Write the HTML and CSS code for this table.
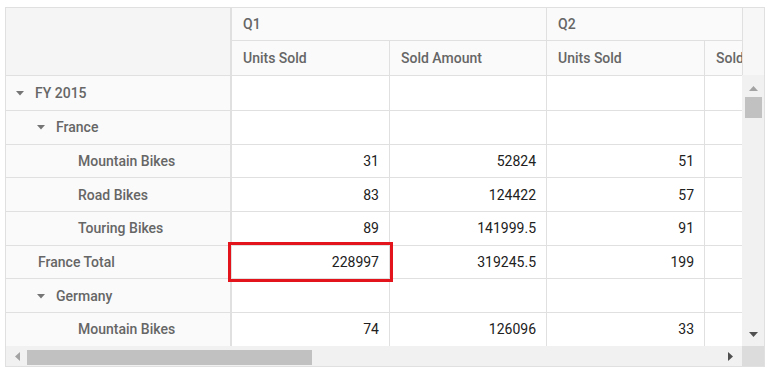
FILE: index.html
```html
<!DOCTYPE html>
<html>
<head>
<meta charset="utf-8">
<link rel="stylesheet" href="styles.css">
</head>
<body>
<div class="pivot">
  <div class="viewport">
    <table class="pv-table">
      <colgroup>
        <col class="c-row"><col class="c-1"><col class="c-2"><col class="c-3"><col class="c-4">
      </colgroup>
      <thead>
        <tr class="hrow1">
          <th class="corner-cell" rowspan="2"></th>
          <th class="colhead" colspan="2">Q1</th>
          <th class="colhead" colspan="2">Q2</th>
        </tr>
        <tr class="hrow2">
          <th class="colhead">Units Sold</th>
          <th class="colhead">Sold Amount</th>
          <th class="colhead">Units Sold</th>
          <th class="colhead">Sold Amount</th>
        </tr>
      </thead>
      <tbody>
        <tr>
          <th class="rowhead lvl0"><span class="caret"><svg width="8" height="5" viewBox="0 0 8 5"><path d="M0 0H8L4 4.5Z"/></svg></span>FY 2015</th>
          <td></td><td></td><td></td><td></td>
        </tr>
        <tr>
          <th class="rowhead lvl1"><span class="caret"><svg width="8" height="5" viewBox="0 0 8 5"><path d="M0 0H8L4 4.5Z"/></svg></span>France</th>
          <td></td><td></td><td></td><td></td>
        </tr>
        <tr>
          <th class="rowhead leaf">Mountain Bikes</th>
          <td>31</td><td>52824</td><td>51</td><td></td>
        </tr>
        <tr>
          <th class="rowhead leaf">Road Bikes</th>
          <td>83</td><td>124422</td><td>57</td><td></td>
        </tr>
        <tr>
          <th class="rowhead leaf">Touring Bikes</th>
          <td>89</td><td>141999.5</td><td>91</td><td></td>
        </tr>
        <tr>
          <th class="rowhead total">France Total</th>
          <td>228997</td><td>319245.5</td><td>199</td><td></td>
        </tr>
        <tr>
          <th class="rowhead lvl1"><span class="caret"><svg width="8" height="5" viewBox="0 0 8 5"><path d="M0 0H8L4 4.5Z"/></svg></span>Germany</th>
          <td></td><td></td><td></td><td></td>
        </tr>
        <tr>
          <th class="rowhead leaf">Mountain Bikes</th>
          <td>74</td><td>126096</td><td>33</td><td></td>
        </tr>
      </tbody>
    </table>
  </div>
  <div class="vscroll">
    <div class="vs-head"></div>
    <div class="vs-track">
      <span class="arrow up"><svg width="9" height="5" viewBox="0 0 9 5"><path d="M0 5H9L4.5 0Z"/></svg></span>
      <span class="vthumb"></span>
      <span class="vspace"></span>
      <span class="arrow down"><svg width="9" height="5" viewBox="0 0 9 5"><path d="M0 0H9L4.5 5Z"/></svg></span>
    </div>
  </div>
  <div class="hscroll">
    <span class="arrow left"><svg width="5" height="9" viewBox="0 0 5 9"><path d="M5 0V9L0 4.5Z"/></svg></span>
    <span class="hthumb"></span>
    <span class="hspace"></span>
    <span class="arrow right"><svg width="5" height="9" viewBox="0 0 5 9"><path d="M0 0V9L5 4.5Z"/></svg></span>
  </div>
  <div class="sb-corner"></div>
  <div class="highlight"></div>
</div>
</body>
</html>
```

FILE: styles.css
```css
html, body {
  margin: 0;
  padding: 0;
  background: #ffffff;
}

body {
  font-family: Roboto, "Liberation Sans", Arial, sans-serif;
  font-size: 14px;
}

.pivot {
  position: relative;
  box-sizing: border-box;
  margin: 7px 0 0 5px;
  width: 760px;
  height: 360px;
  border: 1px solid #e0e0e0;
  display: grid;
  grid-template-columns: 1fr 22px;
  grid-template-rows: 1fr 20px;
}

.viewport {
  grid-column: 1;
  grid-row: 1;
  overflow: hidden;
}

.pv-table {
  table-layout: fixed;
  border-collapse: separate;
  border-spacing: 0;
  width: 858px;
}

.c-row { width: 226px; }
.c-1 { width: 158px; }
.c-2 { width: 157px; }
.c-3 { width: 158px; }
.c-4 { width: 159px; }

.pv-table th,
.pv-table td {
  box-sizing: border-box;
  border-right: 1px solid #e0e0e0;
  border-bottom: 1px solid #e0e0e0;
  padding: 0;
  white-space: nowrap;
  overflow: hidden;
}

.hrow1 th { height: 33px; }
.hrow2 th { height: 35px; }
.pv-table tbody tr { height: 33.67px; }
.pv-table tbody tr:first-child { height: 35px; }

.corner-cell {
  background: #f5f5f5;
  border-right: 2px solid #e0e0e0 !important;
}

.colhead {
  background: #fafafa;
  color: #666666;
  font-weight: 500;
  text-align: left;
  padding-left: 11px !important;
}

.rowhead {
  background: #fafafa;
  color: #666666;
  font-weight: 500;
  text-align: left;
  border-right: 2px solid #e0e0e0 !important;
}

.caret {
  display: inline-block;
  width: 8px;
  margin-right: 11px;
  vertical-align: 2px;
  line-height: 0;
}

.caret svg { fill: #757575; }

.lvl0 { padding-left: 10px !important; }
.lvl1 { padding-left: 31px !important; }
.leaf { padding-left: 72px !important; }
.total { padding-left: 32px !important; }

.pv-table td {
  background: #ffffff;
  color: #212121;
  text-align: right;
  padding-right: 10px;
}

.vscroll {
  grid-column: 2;
  grid-row: 1;
  display: flex;
  flex-direction: column;
}

.vs-head {
  height: 67px;
  background: #f7f7f7;
  border-left: 1px solid #e0e0e0;
}

.vs-track {
  flex: 1;
  background: #f1f1f1;
  display: flex;
  flex-direction: column;
  align-items: center;
  padding: 11px 0 9px;
}

.arrow { line-height: 0; display: block; }
.arrow svg { display: block; }
.up svg, .left svg { fill: #a3a3a3; }
.down svg, .right svg { fill: #505050; }

.vthumb {
  display: block;
  width: 17px;
  height: 21px;
  margin-top: 6px;
  background: #c1c1c1;
}

.vspace { flex: 1; }

.hscroll {
  grid-column: 1;
  grid-row: 2;
  background: #f1f1f1;
  display: flex;
  align-items: center;
  padding: 0 9px 0 9px;
}

.hthumb {
  display: block;
  width: 285px;
  height: 15px;
  margin-left: 7px;
  margin-top: 2px;
  background: #c1c1c1;
}

.hspace { flex: 1; }

.sb-corner {
  grid-column: 2;
  grid-row: 2;
  background: #dcdcdc;
}

.highlight {
  position: absolute;
  left: 222px;
  top: 234px;
  width: 165px;
  height: 40px;
  box-sizing: border-box;
  border: 3px solid #e3141c;
  pointer-events: none;
}
```
